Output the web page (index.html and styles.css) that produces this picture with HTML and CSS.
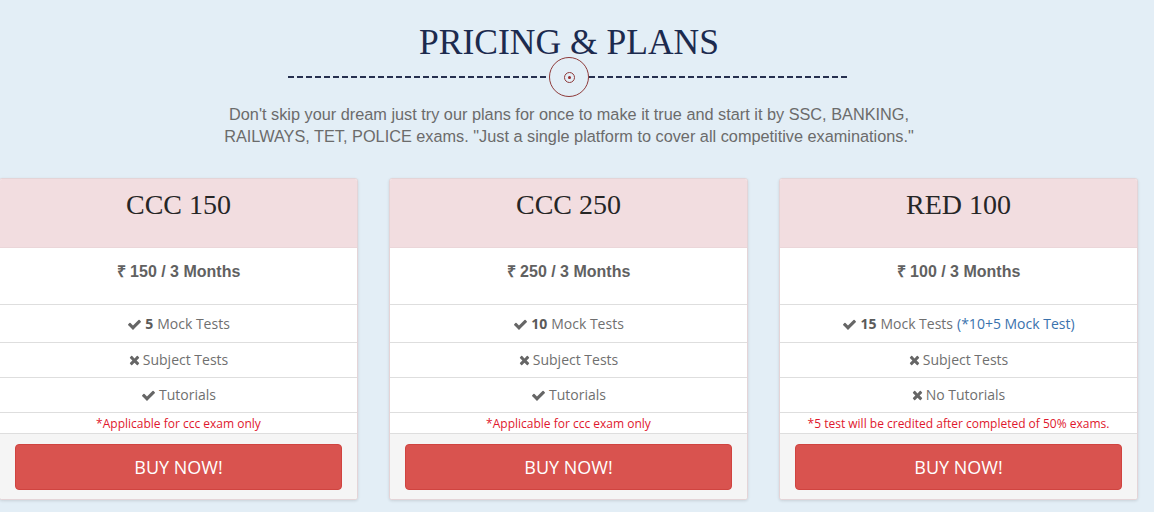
FILE: index.html
```html
<!DOCTYPE html>
<html>
<head>
<meta charset="utf-8">
<link rel="stylesheet" href="styles.css">
</head>
<body>
<section class="pricing">
  <h1 class="title">PRICING &amp; PLANS</h1>
  <div class="divider">
    <span class="dash"></span>
    <span class="ring"><span class="inner"><span class="dot"></span></span></span>
    <span class="dash"></span>
  </div>
  <p class="lead">Don't skip your dream just try our plans for once to make it true and start it by SSC, BANKING,<br>RAILWAYS, TET, POLICE exams. "Just a single platform to cover all competitive examinations."</p>

  <div class="cards">
    <div class="card">
      <div class="card-head">CCC 150</div>
      <div class="price">₹ 150 / 3 Months</div>
      <div class="row first"><svg class="ic check" viewBox="0 0 1792 1792"><path d="M1671 566q0 40-28 68l-724 724-136 136q-28 28-68 28t-68-28l-136-136-362-362q-28-28-28-68t28-68l136-136q28-28 68-28t68 28l294 295 656-657q28-28 68-28t68 28l136 136q28 28 28 68z"/></svg><b>5</b> Mock Tests</div>
      <div class="row"><svg class="ic times" viewBox="0 0 1408 1792"><path d="M1298 1322q0 40-28 68l-136 136q-28 28-68 28t-68-28l-294-294-294 294q-28 28-68 28t-68-28l-136-136q-28-28-28-68t28-68l294-294-294-294q-28-28-28-68t28-68l136-136q28-28 68-28t68 28l294 294 294-294q28-28 68-28t68 28l136 136q28 28 28 68t-28 68l-294 294 294 294q28 28 28 68z"/></svg>Subject Tests</div>
      <div class="row"><svg class="ic check" viewBox="0 0 1792 1792"><path d="M1671 566q0 40-28 68l-724 724-136 136q-28 28-68 28t-68-28l-136-136-362-362q-28-28-28-68t28-68l136-136q28-28 68-28t68 28l294 295 656-657q28-28 68-28t68 28l136 136q28 28 28 68z"/></svg>Tutorials</div>
      <div class="note">*Applicable for ccc exam only</div>
      <div class="foot"><button class="buy">BUY NOW!</button></div>
    </div>

    <div class="card">
      <div class="card-head">CCC 250</div>
      <div class="price">₹ 250 / 3 Months</div>
      <div class="row first"><svg class="ic check" viewBox="0 0 1792 1792"><path d="M1671 566q0 40-28 68l-724 724-136 136q-28 28-68 28t-68-28l-136-136-362-362q-28-28-28-68t28-68l136-136q28-28 68-28t68 28l294 295 656-657q28-28 68-28t68 28l136 136q28 28 28 68z"/></svg><b>10</b> Mock Tests</div>
      <div class="row"><svg class="ic times" viewBox="0 0 1408 1792"><path d="M1298 1322q0 40-28 68l-136 136q-28 28-68 28t-68-28l-294-294-294 294q-28 28-68 28t-68-28l-136-136q-28-28-28-68t28-68l294-294-294-294q-28-28-28-68t28-68l136-136q28-28 68-28t68 28l294 294 294-294q28-28 68-28t68 28l136 136q28 28 28 68t-28 68l-294 294 294 294q28 28 28 68z"/></svg>Subject Tests</div>
      <div class="row"><svg class="ic check" viewBox="0 0 1792 1792"><path d="M1671 566q0 40-28 68l-724 724-136 136q-28 28-68 28t-68-28l-136-136-362-362q-28-28-28-68t28-68l136-136q28-28 68-28t68 28l294 295 656-657q28-28 68-28t68 28l136 136q28 28 28 68z"/></svg>Tutorials</div>
      <div class="note">*Applicable for ccc exam only</div>
      <div class="foot"><button class="buy">BUY NOW!</button></div>
    </div>

    <div class="card">
      <div class="card-head">RED 100</div>
      <div class="price">₹ 100 / 3 Months</div>
      <div class="row first"><svg class="ic check" viewBox="0 0 1792 1792"><path d="M1671 566q0 40-28 68l-724 724-136 136q-28 28-68 28t-68-28l-136-136-362-362q-28-28-28-68t28-68l136-136q28-28 68-28t68 28l294 295 656-657q28-28 68-28t68 28l136 136q28 28 28 68z"/></svg><b>15</b> Mock Tests <span class="blue">(*10+5 Mock Test)</span></div>
      <div class="row"><svg class="ic times" viewBox="0 0 1408 1792"><path d="M1298 1322q0 40-28 68l-136 136q-28 28-68 28t-68-28l-294-294-294 294q-28 28-68 28t-68-28l-136-136q-28-28-28-68t28-68l294-294-294-294q-28-28-28-68t28-68l136-136q28-28 68-28t68 28l294 294 294-294q28-28 68-28t68 28l136 136q28 28 28 68t-28 68l-294 294 294 294q28 28 28 68z"/></svg>Subject Tests</div>
      <div class="row"><svg class="ic times" viewBox="0 0 1408 1792"><path d="M1298 1322q0 40-28 68l-136 136q-28 28-68 28t-68-28l-294-294-294 294q-28 28-68 28t-68-28l-136-136q-28-28-28-68t28-68l294-294-294-294q-28-28-28-68t28-68l136-136q28-28 68-28t68 28l294 294 294-294q28-28 68-28t68 28l136 136q28 28 28 68t-28 68l-294 294 294 294q28 28 28 68z"/></svg>No Tutorials</div>
      <div class="note">*5 test will be credited after completed of 50% exams.</div>
      <div class="foot"><button class="buy">BUY NOW!</button></div>
    </div>
  </div>
</section>
</body>
</html>
```

FILE: styles.css
```css
html, body {
  margin: 0;
  padding: 0;
  background: #e3eef6;
}
body {
  width: 1154px;
  height: 512px;
  overflow: hidden;
  font-family: "Liberation Sans", Arial, sans-serif;
}
.pricing {
  width: 1138px;
  padding-top: 26px;
}
.title {
  margin: 0;
  font-family: "Liberation Serif", "Times New Roman", serif;
  font-weight: normal;
  font-size: 35.5px;
  line-height: 33px;
  color: #1c2a4e;
  text-align: center;
}
.divider {
  width: 562px;
  margin: -2px auto 0;
  display: flex;
  align-items: center;
}
.dash {
  flex: 1;
  height: 2px;
  background: repeating-linear-gradient(90deg, #26304f 0 6px, transparent 6px 9px);
}
.ring {
  width: 38px;
  height: 38px;
  border: 1px solid #8e3a3a;
  border-radius: 50%;
  display: flex;
  align-items: center;
  justify-content: center;
}
.inner {
  width: 9px;
  height: 9px;
  border: 1px solid #8e3a3a;
  border-radius: 50%;
  display: flex;
  align-items: center;
  justify-content: center;
}
.dot {
  width: 3px;
  height: 3px;
  border-radius: 50%;
  background: #9a2a2a;
}
.lead {
  margin: 6px 0 0;
  font-size: 16.3px;
  line-height: 22px;
  color: #6b6b6b;
  text-align: center;
}
.cards {
  display: flex;
  gap: 31px;
  margin: 31px 0 0 -1px;
}
.card {
  width: 357px;
  border: 1px solid #e4d4d7;
  border-radius: 3px;
  background: #fff;
  box-shadow: 0 1px 3px rgba(0, 0, 0, 0.12);
  overflow: hidden;
  text-align: center;
}
.card-head {
  background: #f2dde0;
  font-family: "Liberation Serif", "Times New Roman", serif;
  font-size: 28px;
  line-height: 30px;
  color: #262626;
  padding: 11px 0 27px;
}
.price {
  border-top: 1px solid #ebd6d9;
  font-weight: bold;
  font-size: 16px;
  line-height: 20px;
  color: #616161;
  padding: 14px 0 22px;
}
.row {
  border-top: 1px solid #dedede;
  font-family: "Open Sans", sans-serif;
  font-size: 14px;
  line-height: 20px;
  color: #6f6f6f;
  padding: 7px 0 7px;
  display: flex;
  justify-content: center;
  align-items: center;
}
.row.first {
  padding: 9px 0 8px;
}
.row b {
  color: #5a5a5a;
  margin-right: 4px;
}
.blue {
  color: #3a72ad;
  margin-left: 4px;
}
.ic {
  fill: #666;
  margin-right: 3px;
}
.check {
  width: 15px;
  height: 15px;
}
.times {
  width: 11px;
  height: 14px;
}
.note {
  border-top: 1px solid #dedede;
  font-family: "Open Sans", sans-serif;
  font-size: 12px;
  line-height: 16px;
  color: #e0182d;
  padding: 3px 0 1px;
}
.foot {
  border-top: 1px solid #dedede;
  background: #f5f5f5;
  padding: 10px 15px 9px;
}
.buy {
  display: block;
  width: 100%;
  height: 46px;
  border: 1px solid #d04440;
  border-radius: 4px;
  background: #d9534f;
  color: #fff;
  font-family: "Open Sans", sans-serif;
  font-size: 18px;
  cursor: pointer;
}
```
